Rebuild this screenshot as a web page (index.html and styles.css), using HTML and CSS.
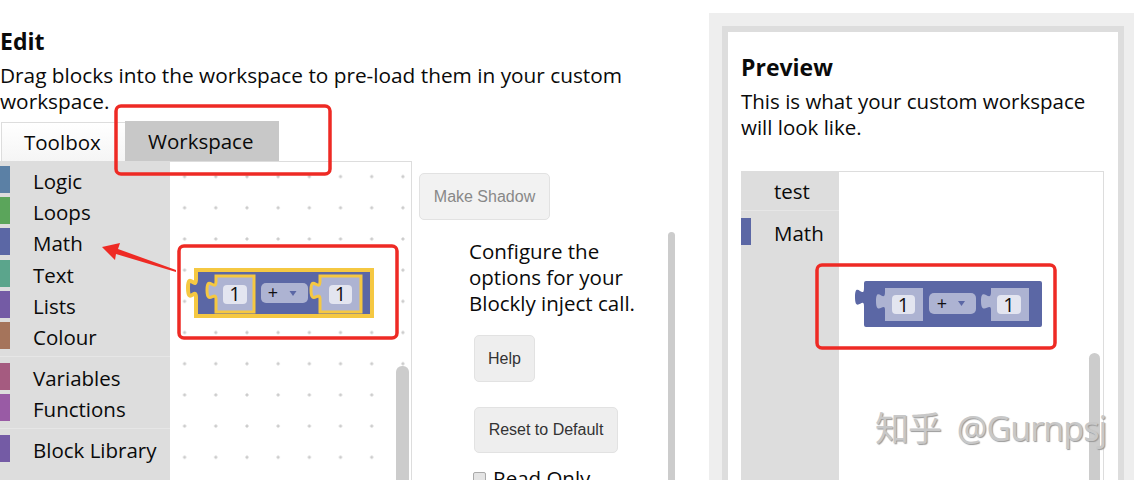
FILE: index.html
```html
<!DOCTYPE html>
<html lang="en">
<head>
  <meta charset="UTF-8" />
  <title>Blockly Workspace Factory</title>
  <link rel="stylesheet" href="styles.css">
</head>
<body>
  <main class="editor">
    <h2>Edit</h2>
    <p class="intro">Drag blocks into the workspace to pre-load them in your custom workspace.</p>

    <div class="tabs">
      <span class="tab">Toolbox</span>
      <span class="tab tab-active">Workspace</span>
    </div>

    <div class="edit-row">
      <ul class="toolbox">
        <li class="cat"><i class="bar logic"></i>Logic</li>
        <li class="cat"><i class="bar loops"></i>Loops</li>
        <li class="cat"><i class="bar math"></i>Math</li>
        <li class="cat"><i class="bar text"></i>Text</li>
        <li class="cat"><i class="bar lists"></i>Lists</li>
        <li class="cat"><i class="bar colour"></i>Colour</li>
        <li class="sep"></li>
        <li class="cat"><i class="bar variables"></i>Variables</li>
        <li class="cat"><i class="bar functions"></i>Functions</li>
        <li class="sep"></li>
        <li class="cat"><i class="bar library"></i>Block Library</li>
      </ul>

      <div class="workspace">
        <svg class="block block-edit" width="192" height="52" viewBox="0 0 192 52">
          <path d="M10 3h176v46H10V30c0-10-8 8-8-9s8 3 8-9z" fill="#5b67a5" stroke="#f5c842" stroke-width="4"/>
          <path d="M30 9h38v36H30V32c0-9-9 7-9-9s9 3 9-9z" fill="#adb3d2" stroke="#f5c842" stroke-width="3"/>
          <rect x="37" y="18" width="24" height="19" rx="4" fill="#e3e5f0"/>
          <text x="49" y="34" class="block-num">1</text>
          <rect x="75" y="16" width="47" height="20" rx="5" fill="#adb3d2"/>
          <text x="87" y="32" class="block-op">+</text>
          <path d="M103.500 24h7l-3.500 5z" fill="#5b67a5"/>
          <path d="M134 9h41v36h-41V32c0-9-9 7-9-9s9 3 9-9z" fill="#adb3d2" stroke="#f5c842" stroke-width="3"/>
          <rect x="143" y="18" width="23" height="19" rx="4" fill="#e3e5f0"/>
          <text x="154.500" y="34" class="block-num">1</text>
        </svg>
        <div class="scroll scroll-ws"></div>
      </div>

      <div class="side">
        <button class="btn btn-off">Make Shadow</button>
        <div class="options">
          <p>Configure the options for your Blockly inject call.</p>
          <button class="btn btn-help">Help</button>
          <button class="btn btn-reset">Reset to Default</button>
          <label class="check"><input type="checkbox" />Read Only</label>
        </div>
        <div class="scroll scroll-opts"></div>
      </div>
    </div>
  </main>

  <aside class="preview-wrap">
    <div class="preview">
      <h2>Preview</h2>
      <p class="intro">This is what your custom workspace will look like.</p>
      <div class="preview-row">
        <ul class="toolbox toolbox-small">
          <li class="cat">test</li>
          <li class="sep"></li>
          <li class="cat"><i class="bar math"></i>Math</li>
        </ul>
        <div class="preview-ws">
          <svg class="block block-prev" width="188" height="47" viewBox="0 0 188 47">
            <path d="M11 0h174q2 0 2 2v42q0 2-2 2H11q-2 0-2-2V25c0-10-9 8-9-9s9 3 9-9V2q0-2 2-2z" fill="#5b67a5"/>
            <path d="M30 7h38v33H30V29c0-9-9 7-9-9s9 3 9-9z" fill="#adb3d2"/>
            <rect x="37" y="14" width="23" height="19" rx="4" fill="#e3e5f0"/>
            <text x="48.500" y="31" class="block-num">1</text>
            <rect x="74" y="12" width="47" height="21" rx="5" fill="#adb3d2"/>
            <text x="87" y="29" class="block-op">+</text>
            <path d="M103 20h7l-3.500 5z" fill="#5b67a5"/>
            <path d="M136 7h38v33h-38V29c0-9-10 7-10-9s10 3 10-9z" fill="#adb3d2"/>
            <rect x="142" y="14" width="24" height="19" rx="4" fill="#e3e5f0"/>
            <text x="154" y="31" class="block-num">1</text>
          </svg>
          <div class="scroll scroll-prev"></div>
        </div>
      </div>
    </div>
  </aside>

  <!-- red marks drawn on top of the screenshot -->
  <svg class="marks" width="1134" height="480" viewBox="0 0 1134 480">
    <rect x="116" y="106" width="214" height="68" rx="5"/>
    <rect x="179" y="246" width="218" height="92" rx="5"/>
    <rect x="817" y="265" width="238" height="83" rx="5"/>
    <path class="arrow" d="M102 247l18-4-2 6 58 21v2l-60-18-1 6z"/>
  </svg>

  <div class="watermark">知乎 @Gurnpsj</div>
</body>
</html>
```

FILE: styles.css
```css
* {
  box-sizing: border-box;
}

html, body {
  margin: 0;
  height: 480px;
  overflow: hidden;
}

body {
  display: flex;
  position: relative;
  background: #fff;
  color: #0a0a0a;
  font-family: "Open Sans", "Noto Sans", sans-serif;
  font-size: 20.500px;
}

h2 {
  margin: 0;
  font-size: 23px;
  line-height: 30px;
  font-weight: 700;
}

.intro {
  margin: 0;
  line-height: 26px;
}

ul {
  list-style: none;
  margin: 0;
  padding: 0;
}

.editor {
  width: 709px;
  flex: none;
  padding-top: 26px;
}

.editor .intro {
  width: 640px;
  margin-top: 6px;
  font-size: 20.800px;
}

.tabs {
  display: flex;
  margin-top: 7px;
  margin-left: 1px;
  height: 40px;
}

.tab {
  width: 124px;
  height: 39px;
  margin-top: 1px;
  padding-left: 22px;
  line-height: 38px;
  border: 1px solid #ddd;
  border-width: 1px 0 0 1px;
  background: linear-gradient(#fff, #f5f5f5);
}

.tab-active {
  width: 154px;
  height: 40px;
  margin-top: 0;
  padding-left: 23px;
  border: 0;
  background: #c8c8c8;
  line-height: 40px;
}

.edit-row {
  display: flex;
  height: 320px;
}

.toolbox {
  width: 170px;
  flex: none;
  padding-top: 5px;
  background: #ddd;
}

.cat {
  display: flex;
  align-items: center;
  height: 27px;
  margin-bottom: 4.200px;
  padding: 4px 0 0 33px;
  line-height: 27px;
  position: relative;
}

.sep {
  height: 1px;
  margin: 7px 0 6px;
  background: #e6e6e6;
}

.bar {
  position: absolute;
  left: 0;
  top: 0;
  width: 10px;
  height: 27px;
}

.logic { background: #5b80a5; }
.loops { background: #5ba55b; }
.math { background: #5b67a5; }
.text { background: #5ba58c; }
.lists { background: #745ba5; }
.colour { background: #a5745b; }
.variables { background: #a55b80; }
.functions { background: #995ba5; }
.library { background: #745ba5; }

.workspace {
  width: 242px;
  flex: none;
  position: relative;
  border: 1px solid #ddd;
  border-width: 1px 1px 0 0;
  background-image: radial-gradient(circle, #ccc 1.300px, transparent 1.800px);
  background-size: 31.200px 31.200px;
  background-position: -1px -1px;
}

.block {
  position: absolute;
}

.block-edit {
  left: 16px;
  top: 105px;
}

.block-num, .block-op {
  font-family: "Open Sans", sans-serif;
  font-size: 20px;
  fill: #111;
  text-anchor: middle;
}

.block-op {
  font-size: 18px;
}

.scroll {
  position: absolute;
  background: #ccc;
  border-radius: 6px 6px 0 0;
  bottom: 0;
}

.scroll-ws {
  right: 2px;
  width: 13px;
  height: 115px;
}

.side {
  flex: 1;
  position: relative;
  padding: 12px 0 0 7px;
}

.btn {
  display: block;
  font-family: "Liberation Sans", Arial, sans-serif;
  font-size: 16px;
  color: #333;
  background: #eee;
  border: 1px solid #e2e2e2;
  border-radius: 5px;
  height: 47px;
  padding: 0;
}

.btn-off {
  width: 131px;
  color: #888;
  background: #f2f2f2;
}

.options {
  margin: 18px 0 0 50px;
  width: 190px;
}

.options p {
  margin: 0 0 19px;
  line-height: 26px;
}

.btn-help {
  margin-left: 5px;
  width: 61px;
}

.btn-reset {
  margin: 25px 0 0 5px;
  width: 144px;
  height: 46px;
}

.check {
  display: flex;
  align-items: center;
  margin: 12px 0 0 4px;
  line-height: 26px;
}

.check input {
  appearance: none;
  width: 13px;
  height: 13px;
  margin: 0 7px 0 0;
  background: #e4e4e4;
  border: 1px solid #aaa;
  border-radius: 2px;
}

.scroll-opts {
  left: 256px;
  width: 7px;
  height: 249px;
}

.preview-wrap {
  width: 425px;
  flex: none;
  margin-top: 13px;
  padding: 13px 10px 0 13px;
  background: #eee;
}

.preview {
  height: 460px;
  border: 6px solid #ddd;
  border-bottom: 0;
  background: #fff;
  padding: 20px 0 0 13px;
}

.preview h2 {
  line-height: 30px;
}

.preview .intro {
  width: 350px;
  margin-top: 6px;
}

.preview-row {
  display: flex;
  width: 363px;
  height: 320px;
  margin-top: 31px;
}

.toolbox-small {
  width: 98px;
  padding-top: 5px;
}

.toolbox-small .sep {
  margin: 7px 0 7px;
}

.preview-ws {
  flex: 1;
  position: relative;
  border: 1px solid #ddd;
  border-width: 1px 1px 0 0;
}

.block-prev {
  left: 16px;
  top: 109px;
}

.scroll-prev {
  right: 3px;
  width: 11px;
  height: 138px;
}

.marks {
  position: absolute;
  left: 0;
  top: 0;
  fill: none;
  stroke: #ee2a24;
  stroke-width: 3.500px;
}

.marks .arrow {
  fill: #ee2a24;
  stroke: none;
}

.watermark {
  position: absolute;
  left: 875px;
  top: 404px;
  font-family: "Noto Sans", "Noto Sans CJK SC", sans-serif;
  font-size: 34px;
  line-height: 48px;
  white-space: nowrap;
  word-spacing: 8px;
  letter-spacing: -1px;
  color: #c8c8c8;
  text-shadow: 1px 1px 1px #999;
}
```
